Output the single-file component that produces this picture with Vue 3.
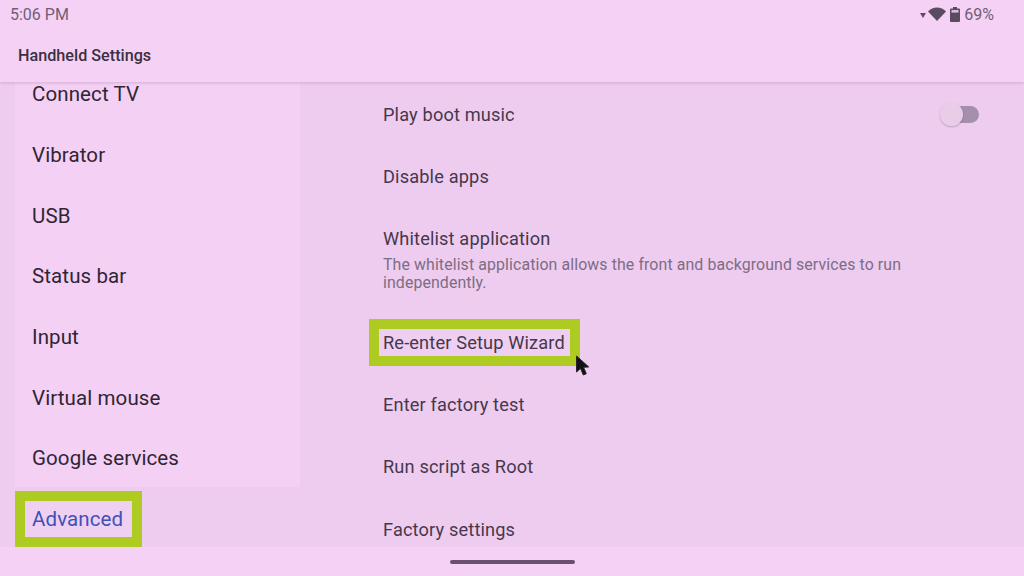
<script setup>
const sections = ['Connect TV', 'Vibrator', 'USB', 'Status bar', 'Input', 'Virtual mouse', 'Google services']
</script>

<template>
  <div class="screen">
    <header class="top">
      <div class="status">
        <span class="time">5:06 PM</span>
        <div class="status-right">
          <svg class="arrow" width="6" height="5" viewBox="0 0 6 5"><path d="M0 0h6L3 5z" /></svg>
          <svg class="wifi" width="18" height="14" viewBox="0 0 18 14"><path d="M0 4.6C2.4 2 5.600.6 9 .6s6.600 1.400 9 4L9 14z" /></svg>
          <svg class="battery" width="10" height="15" viewBox="0 0 10 15">
            <path d="M3 0h4v1.500h2a1 1 0 0 1 1 1V14a1 1 0 0 1-1 1H1a1 1 0 0 1-1-1V2.500a1 1 0 0 1 1-1h2z" />
            <rect x="1.500" y="3" width="7" height="2.600" fill="#d9bcd9" />
          </svg>
          <span class="pct">69%</span>
        </div>
      </div>
      <div class="title">Handheld Settings</div>
    </header>

    <main class="body">
      <nav class="side">
        <div class="side-panel">
          <div v-for="s in sections" :key="s" class="side-item">{{ s }}</div>
        </div>
        <div class="side-item active"><span class="mark">Advanced</span></div>
      </nav>

      <section class="list">
        <div class="row">
          <span>Play boot music</span>
          <span class="toggle"><i class="thumb"></i></span>
        </div>
        <div class="row">Disable apps</div>
        <div class="row multi">
          <div>Whitelist application</div>
          <p>The whitelist application allows the front and background services to run independently.</p>
        </div>
        <div class="row"><span class="mark">Re-enter Setup Wizard</span></div>
        <div class="row">Enter factory test</div>
        <div class="row">Run script as Root</div>
        <div class="row">Factory settings</div>
      </section>
    </main>

    <footer class="nav"><i class="pill"></i></footer>

    <svg class="cursor" width="16" height="23" viewBox="0 0 16 23">
      <path d="M1.500 1v16l4-3.600 2.800 6.600 3-1.300-2.800-6.400 5.200-.4z" fill="#111" stroke="#2a2030" stroke-width="1" />
    </svg>
  </div>
</template>

<style>
body { margin: 0; }
</style>

<style scoped>
.screen {
  position: relative;
  width: 1024px;
  height: 576px;
  overflow: hidden;
  display: flex;
  flex-direction: column;
  background: #eeccf0;
  font-family: Roboto, "Liberation Sans", sans-serif;
  color: #2f2535;
}
.top {
  position: relative;
  z-index: 2;
  flex: 0 0 82px;
  height: 82px;
  background: #f5d2f5;
  box-shadow: 0 1px 3px rgba(90, 60, 100, .22);
}
.status {
  height: 28px;
  padding: 0 30px 0 10px;
  display: flex;
  align-items: center;
  justify-content: space-between;
  font-size: 16px;
  color: #6f5f75;
}
.status-right { display: flex; align-items: center; }
.status-right svg { fill: #5a4c60; }
.arrow { margin-right: 2px; margin-top: 2px; }
.wifi { margin-right: 4px; }
.battery { margin-right: 4px; }
.title {
  padding: 18px 0 0 18px;
  font-size: 16.200px;
  font-weight: 500;
  color: #3c3040;
}
.body {
  flex: 1;
  min-height: 0;
  display: flex;
  overflow: hidden;
}
.side {
  flex: 0 0 285px;
  margin-left: 15px;
  margin-top: -19px;
}
.side-panel {
  box-sizing: border-box;
  height: 424px;
  padding-top: 1px;
  background: #f4d0f4;
}
.side-item {
  height: 60.700px;
  padding-left: 17px;
  display: flex;
  align-items: center;
  font-size: 20.500px;
  letter-spacing: .1px;
}
.side-item.active {
  padding-left: 0;
  height: 56px;
  margin-top: 4px;
  color: #3f51b8;
}
.mark {
  display: inline-block;
  border: 10px solid #aecb22;
  background: #f0d0f2;
  padding: 0 9px 0 7px;
  line-height: 36px;
}
.list {
  flex: 1;
  padding-left: 83px;
  padding-right: 45px;
  margin-top: 1px;
  font-size: 18.200px;
  letter-spacing: .15px;
  color: #46384c;
}
.row {
  height: 62.200px;
  display: flex;
  align-items: center;
  justify-content: space-between;
}
.row .mark {
  margin-left: -14px;
  padding: 0 5px 0 4px;
  line-height: 27px;
  background: #efcff1;
}
.row.multi {
  height: 84px;
  margin-top: -1px;
  display: block;
}
.multi div { margin-top: 21px; line-height: 24px; }
.multi p {
  margin: 5px 0 0;
  font-size: 15.900px;
  line-height: 18px;
  letter-spacing: .1px;
  color: #7d6d83;
  max-width: 540px;
}
.toggle {
  position: relative;
  width: 37px;
  height: 17px;
  border-radius: 9px;
  background: #a58fae;
}
.thumb {
  position: absolute;
  left: -2px;
  top: -3px;
  width: 23px;
  height: 23px;
  border-radius: 50%;
  background: #e9cde8;
  box-shadow: 0 1px 2px rgba(80, 50, 90, .3);
}
.nav {
  flex: 0 0 29px;
  background: #f5d2f5;
  display: flex;
  justify-content: center;
  padding-top: 13px;
  box-sizing: border-box;
}
.pill {
  width: 125px;
  height: 4px;
  border-radius: 2px;
  background: #6b4f70;
  margin-left: 1px;
}
.cursor {
  position: absolute;
  left: 575px;
  top: 355px;
}
</style>
